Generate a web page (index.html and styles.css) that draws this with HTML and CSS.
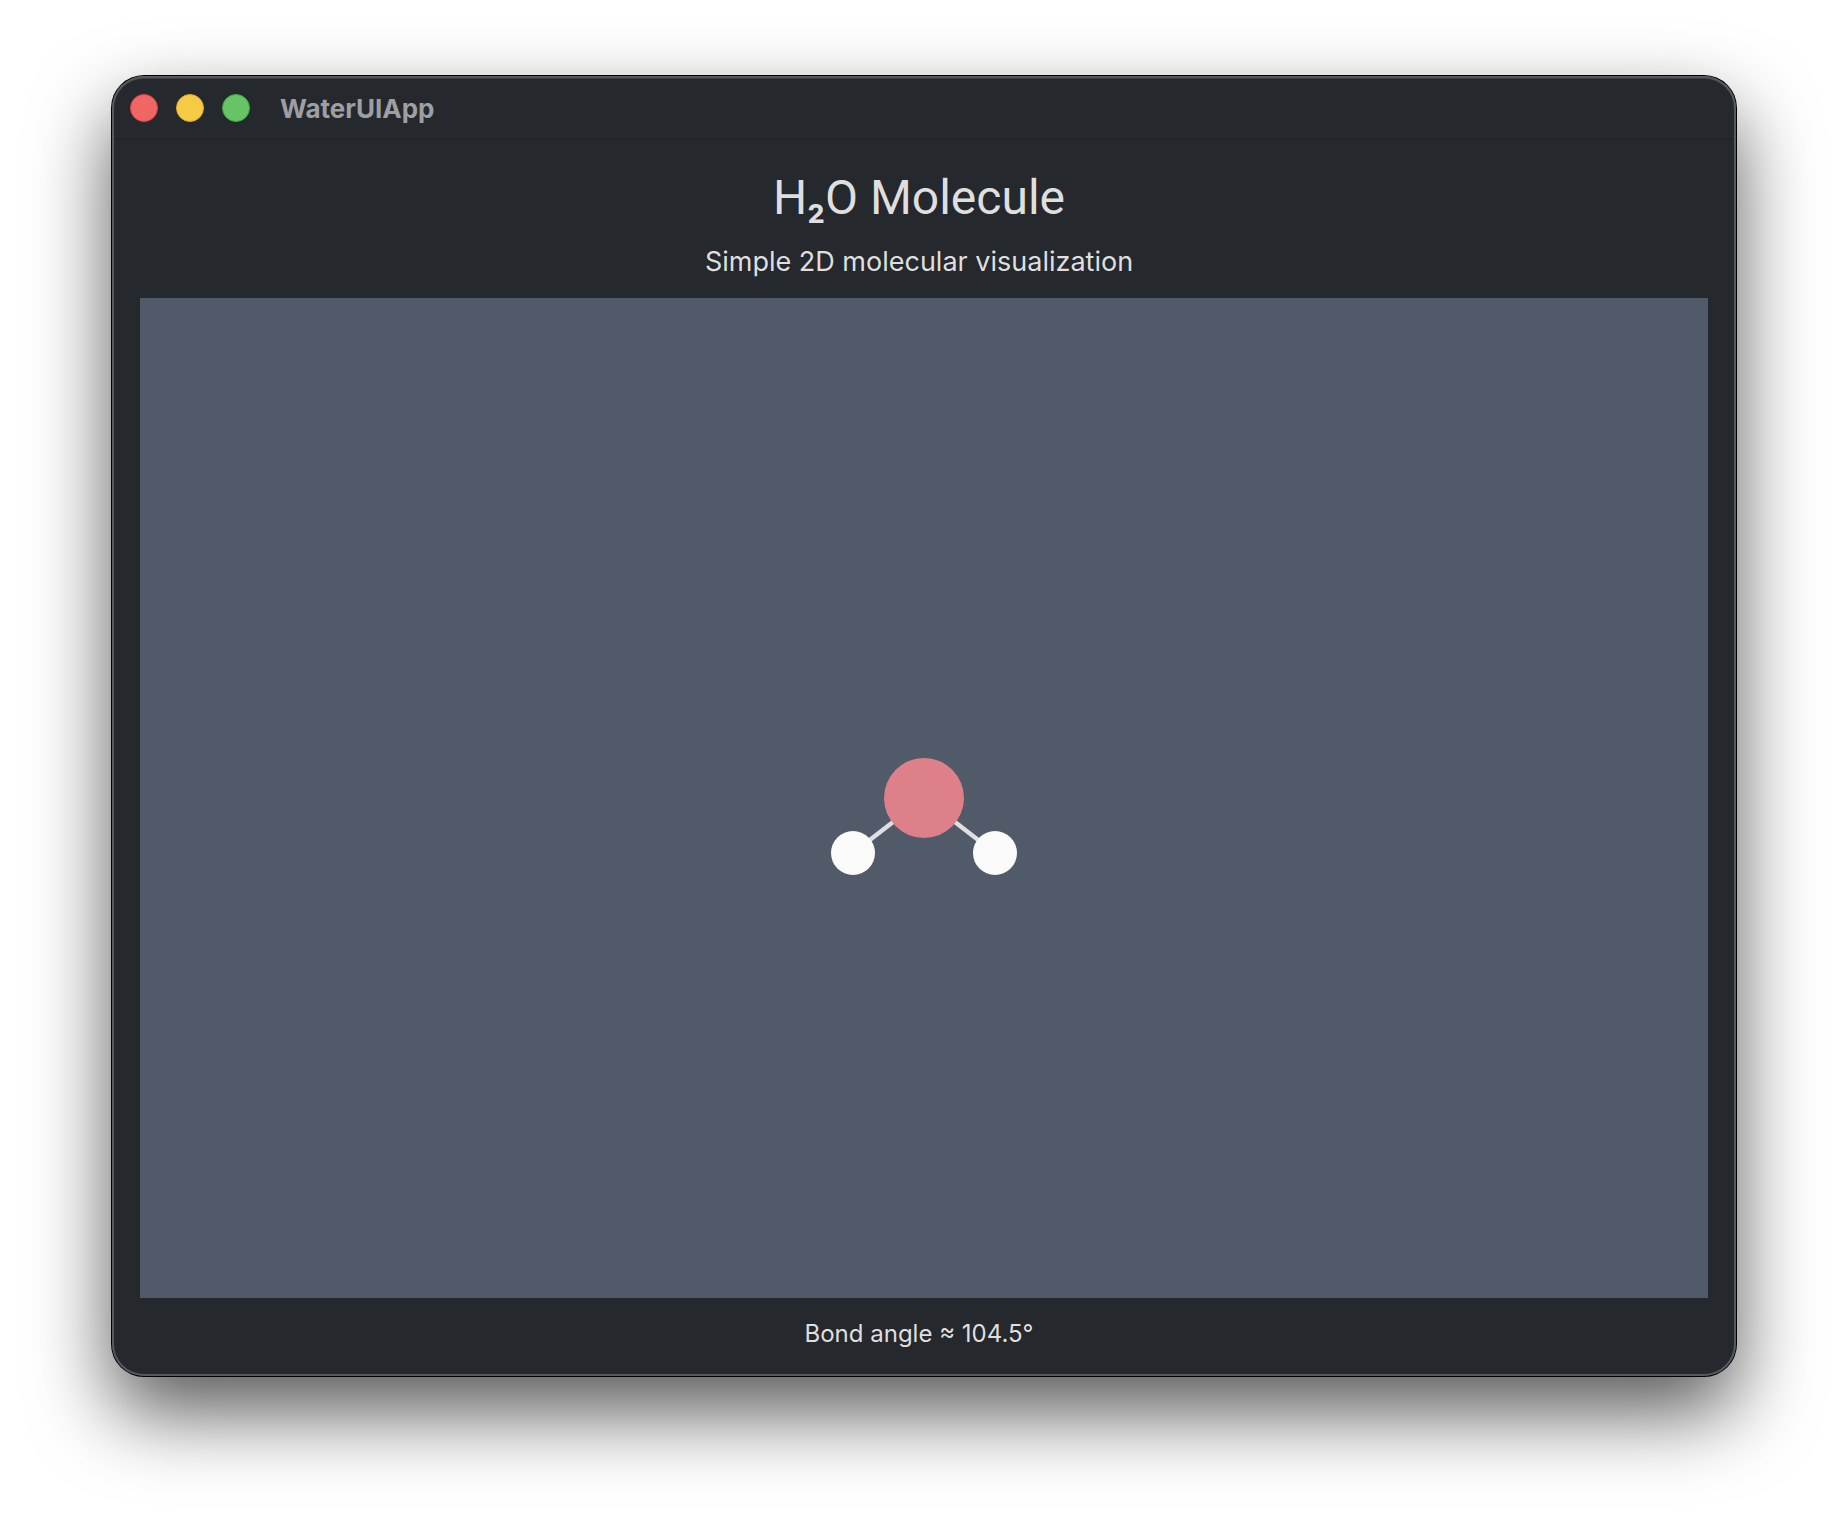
FILE: index.html
```html
<!DOCTYPE html>
<html lang="en">
  <head>
    <meta charset="UTF-8" />
    <meta name="viewport" content="width=device-width, initial-scale=1.0" />
    <title>WaterUIApp</title>
    <link rel="stylesheet" href="styles.css">
  </head>
  <body>
    <div class="window">
      <header class="titlebar">
        <div class="controls">
          <button class="control close" type="button" aria-label="Close"></button>
          <button class="control minimize" type="button" aria-label="Minimize"></button>
          <button class="control zoom" type="button" aria-label="Zoom"></button>
        </div>
        <span class="app-name">WaterUIApp</span>
      </header>

      <main class="content">
        <h1>H<span class="sub">₂</span>O Molecule</h1>
        <p class="subtitle">Simple 2D molecular visualization</p>

        <div class="canvas">
          <svg class="molecule" viewBox="0 0 200 160" role="img" aria-label="Water molecule">
            <!-- bonds -->
            <path d="M29 135L100 80L171 135" fill="none" stroke="#dedfe0" stroke-width="4.5" />
            <!-- oxygen -->
            <circle cx="100" cy="80" r="40" fill="#de808a" />
            <!-- hydrogens -->
            <circle cx="29" cy="135" r="22" fill="#fafafa" />
            <circle cx="171" cy="135" r="22" fill="#fafafa" />
          </svg>
        </div>

        <p class="caption">Bond angle ≈ 104.5°</p>
      </main>
    </div>
  </body>
</html>
```
FILE: styles.css
```css
:root {
  --window-bg: #25282c;
  --canvas-bg: #515a68;
  --text: #dfdfdf;
  --text-muted: #9d9fa3;
}

* {
  box-sizing: border-box;
}

body {
  margin: 0;
  padding: 76px 112px 148px;
  min-height: 100vh;
  display: flex;
  background: #fff;
  color: var(--text);
  font-family: Inter, "Liberation Sans", sans-serif;
}

.window {
  flex: 1;
  display: flex;
  flex-direction: column;
  background: var(--window-bg);
  border-radius: 32px;
  overflow: hidden;
  box-shadow:
    inset 0 0 0 2px #56595d,
    inset 0 2px 0 1px rgba(255, 255, 255, 0.1),
    0 0 0 1px #000,
    0 36px 80px rgba(0, 0, 0, 0.66);
}

.titlebar {
  display: flex;
  align-items: center;
  gap: 30px;
  height: 64px;
  padding: 2px 16px 0;
  margin: 0 2px;
  border-bottom: 2px solid #222427;
}

.controls {
  display: flex;
  gap: 18px;
}

.control {
  width: 28px;
  height: 28px;
  padding: 0;
  border: 1px solid;
  border-radius: 50%;
}

.close {
  background: #f06665;
  border-color: #dd4643;
}

.minimize {
  background: #f5ca45;
  border-color: #dcaa24;
}

.zoom {
  background: #66c466;
  border-color: #40ab40;
}

.app-name {
  color: var(--text-muted);
  font-size: 26px;
  font-weight: 700;
}

.content {
  flex: 1;
  display: flex;
  flex-direction: column;
  padding: 28px 28px 26px;
  text-align: center;
}

h1,
.subtitle,
.caption {
  margin: 0;
  padding-right: 10px;
}

h1 {
  font-family: Roboto, "Liberation Sans", sans-serif;
  font-size: 48px;
  font-weight: 400;
  line-height: 60px;
}

.sub {
  font-weight: 500;
}

.subtitle {
  margin: 16px 0 18px;
  font-size: 27px;
  line-height: 36px;
}

.canvas {
  flex: 1;
  display: flex;
  align-items: center;
  justify-content: center;
  background: var(--canvas-bg);
}

.molecule {
  width: 200px;
  height: 160px;
}

.caption {
  margin-top: 20px;
  font-size: 24px;
  line-height: 32px;
}
```
